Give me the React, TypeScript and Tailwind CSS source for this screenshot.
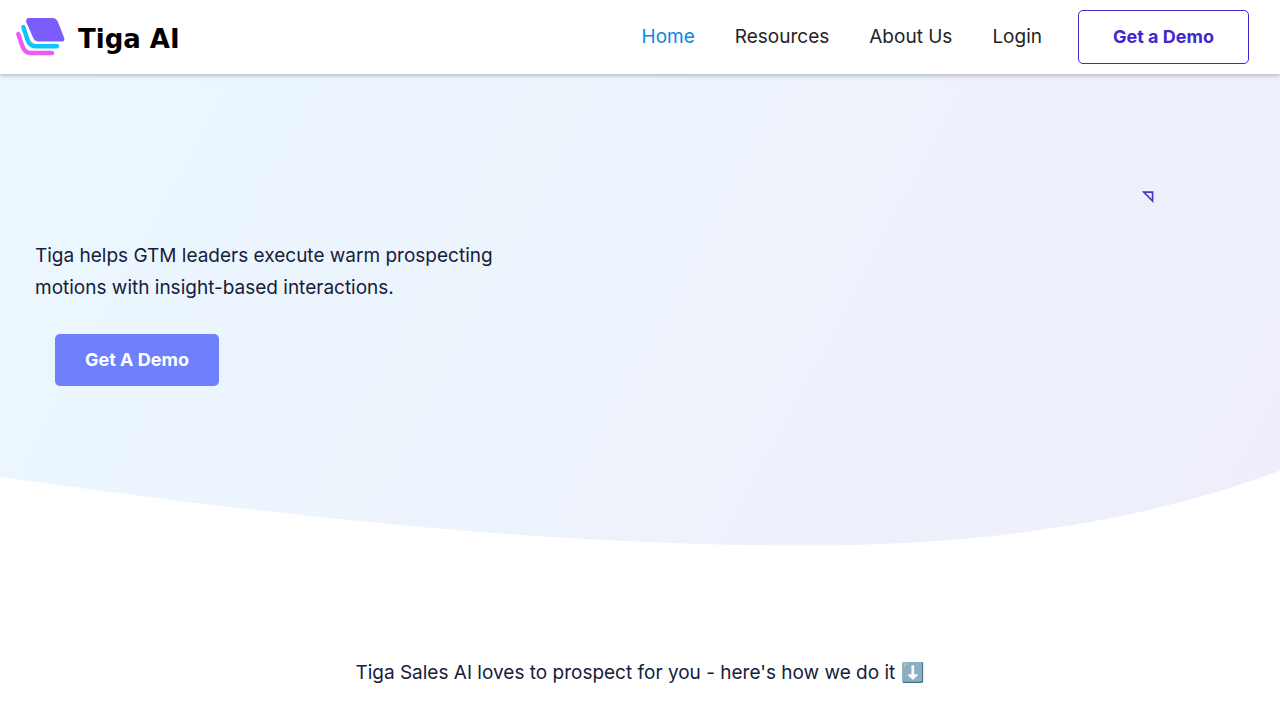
const navLinks = [
  { label: 'Home', active: true },
  { label: 'Resources', active: false },
  { label: 'About Us', active: false },
  { label: 'Login', active: false },
];

function Logo() {
  return (
    <a href="#" className="flex items-center gap-3 text-black">
      <svg viewBox="0 0 50 40" className="h-10 w-[50px]" aria-hidden="true">
        <path
          d="M13 1h23q4.500 0 6 4L48.200 21q1 3.500-2.600 3.500H23q-4.500 0-6-4L10.200 5Q9.500 1 13 1z"
          fill="#7c5cfa"
        />
        <path
          d="M7.300 10l4 12q2.200 7.200 8.200 7.200H41"
          fill="none"
          stroke="#11c5fa"
          strokeWidth="4.400"
          strokeLinecap="round"
        />
        <path
          d="M2.300 17l4 12q2.500 7 8.500 7H36"
          fill="none"
          stroke="#e85cf3"
          strokeWidth="4.400"
          strokeLinecap="round"
        />
      </svg>
      <span className="pt-1 font-['DejaVu_Sans',sans-serif] text-[26px] leading-8 font-bold">
        Tiga AI
      </span>
    </a>
  );
}

function Header() {
  return (
    <header className="relative z-10 flex items-center justify-between bg-white py-2.5 pr-[31px] pl-4 shadow-[0_1px_5px_rgba(0,0,0,0.3)]">
      <Logo />
      <div className="flex items-center gap-9">
        <nav className="flex items-center gap-10">
          {navLinks.map((link) => (
            <a
              key={link.label}
              href="#"
              className={link.active ? 'text-[#0b87e0]' : 'text-[#242424]'}
            >
              {link.label}
            </a>
          ))}
        </nav>
        <button
          type="button"
          className="h-[54px] rounded-[5px] border border-[#4326cf] px-[34px] text-lg font-bold text-[#4326cf]"
        >
          Get a Demo
        </button>
      </div>
    </header>
  );
}

function Hero() {
  return (
    <section className="bg-linear-[118deg] from-[#ebf7ff] via-[#edf3fc] to-[#eeeefa]">
      <div className="flex items-start justify-between pt-[116px] pr-[126px] pb-[84px] pl-[35px]">
        <div className="max-w-[500px] pt-[50px]">
          <p>
            Tiga helps GTM leaders execute warm prospecting motions with
            insight-based interactions.
          </p>
          <button
            type="button"
            className="mt-[30px] ml-5 h-[52px] rounded-[5px] bg-[#6f80ff] px-[30px] text-lg font-bold text-white"
          >
            Get A Demo
          </button>
        </div>
        <svg viewBox="0 0 12 13" className="h-[13px] w-3" aria-hidden="true">
          <path
            d="M1.800 2.200h8.800v8.800z"
            fill="none"
            stroke="#4b35d0"
            strokeWidth="1.700"
          />
        </svg>
      </div>
      <svg
        viewBox="0 0 1280 76"
        preserveAspectRatio="none"
        className="block h-[76px] w-full"
        aria-hidden="true"
      >
        <path
          d="M0 7C270 45 540 75.500 803 75.500C990 75.500 1150 50 1280 0.500V76H0z"
          fill="#fff"
        />
      </svg>
    </section>
  );
}

export default function App() {
  return (
    <div className="min-h-screen bg-white font-['Inter',sans-serif] text-[19px] leading-8 text-[#16203a]">
      <Header />
      <main>
        <Hero />
        <section className="px-[35px] pt-[111px] pb-8 text-center">
          <p>Tiga Sales AI loves to prospect for you - here's how we do it ⬇️</p>
        </section>
      </main>
    </div>
  );
}
